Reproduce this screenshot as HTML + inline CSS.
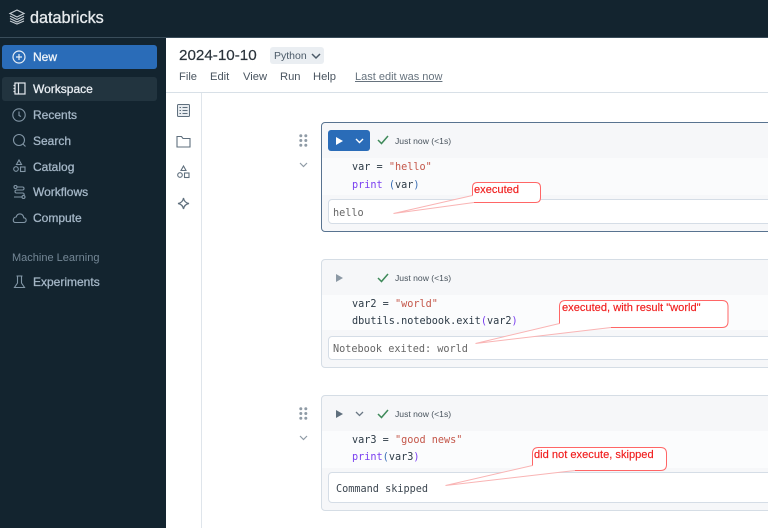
<!DOCTYPE html>
<html><head><meta charset="utf-8"><style>
*{box-sizing:border-box}
html,body{margin:0;padding:0;width:768px;height:528px;overflow:hidden;background:#fff;font-family:"Liberation Sans",sans-serif}
.a{position:absolute;white-space:nowrap}
.nav{position:absolute;left:33px;font-size:12px;font-weight:normal;-webkit-text-stroke:.3px currentColor;color:#a4b6c6;line-height:16px;white-space:nowrap}
.menu{position:absolute;top:70px;font-size:11.2px;color:#4a5560;line-height:15px}
.cell{position:absolute;left:321px;width:460px;background:#f6f7f9;border:1px solid #d5dde5;border-radius:4px}
.code{position:absolute;left:352px;font-family:"DejaVu Sans Mono",monospace;font-size:10.2px;line-height:14px;color:#2c3a46;white-space:pre}
.out{position:absolute;left:328px;width:450px;background:#fff;border:1px solid #d5dde6;border-radius:4px}
.outt{position:absolute;font-family:"DejaVu Sans Mono",monospace;font-size:10.2px;line-height:14px;color:#666;white-space:pre}
.time{position:absolute;left:395px;font-size:8.6px;color:#47525c;line-height:12px;white-space:nowrap}
.red{position:absolute;font-size:11.1px;color:#f01c1c;line-height:13px;white-space:nowrap;-webkit-text-stroke:.15px #f01c1c}
.s{color:#c4574a}.k{color:#7a3ff0}.p{color:#3b6fb5}
svg{position:absolute;overflow:visible}
</style></head><body>
<div class="a" style="left:0;top:0;width:768px;height:38px;background:#13242f;border-bottom:1px solid #3a4d5a"></div>
<div class="a" style="left:0;top:38px;width:166px;height:490px;background:#13242f"></div>
<svg style="left:9px;top:9px" width="16" height="16" viewBox="0 0 16 16" fill="none" stroke="#c5ccd2" stroke-width="1.200"><path d="M8 1L15 4.500L8 8L1 4.500Z"/><path d="M1 7L8 10.500L15 7M1 9.500L8 13L15 9.500M1 12L8 15L15 12"/></svg>
<div class="a" style="left:30px;top:9px;font-size:16.200px;line-height:18px;color:#e6eaed;-webkit-text-stroke:.3px #e6eaed">databricks</div>

<div class="a" style="left:2px;top:45px;width:155px;height:24px;background:#2a6cb8;border-radius:3px"></div>
<svg style="left:12px;top:50px" width="14" height="14" viewBox="0 0 14 14" fill="none" stroke="#e8eef5" stroke-width="1.200"><circle cx="7" cy="7" r="6"/><path d="M7 4V10M4 7H10"/></svg>
<div class="nav" style="top:49px;color:#eef3f8">New</div>

<div class="a" style="left:2px;top:77px;width:155px;height:24px;background:#22343f;border-radius:3px"></div>
<svg style="left:13px;top:82px" width="13" height="14" viewBox="0 0 13 14" fill="none" stroke="#e4e9ee" stroke-width="1.200"><rect x="2" y="1" width="10" height="11"/><path d="M5.500 1V12M0.500 3.500H2.500M0.500 6.500H2.500M0.500 9.500H2.500"/></svg>
<div class="nav" style="top:81px;color:#e8edf2">Workspace</div>

<svg style="left:12px;top:108px" width="14" height="14" viewBox="0 0 14 14" fill="none" stroke="#8296a6" stroke-width="1.100"><circle cx="7" cy="7" r="6.200"/><path d="M7 3.500V7.500L9 8.500"/></svg>
<div class="nav" style="top:107px">Recents</div>
<svg style="left:13px;top:134px" width="14" height="14" viewBox="0 0 14 14" fill="none" stroke="#8296a6" stroke-width="1.100"><circle cx="6" cy="6" r="5.500"/><path d="M10 10L12.500 12.500"/></svg>
<div class="nav" style="top:133px">Search</div>
<svg style="left:13px;top:159px" width="13" height="14" viewBox="0 0 13 14" fill="none" stroke="#8296a6" stroke-width="1.100"><path d="M6 1L8.500 5.500H3.500Z"/><circle cx="3" cy="10" r="2.300"/><rect x="7.500" y="8" width="4.500" height="4.500"/></svg>
<div class="nav" style="top:159px">Catalog</div>
<svg style="left:13px;top:185px" width="13" height="14" viewBox="0 0 13 14" fill="none" stroke="#8296a6" stroke-width="1.100"><circle cx="2.500" cy="2" r="1.500"/><circle cx="10.500" cy="12" r="1.500"/><path d="M4 2H9.500C11.500 2 11.500 5 9.500 5H3.500C1.500 5 1.500 8 3.500 8H9.500C11.500 8 11.500 10 10.500 10.500M1 12H8.500"/></svg>
<div class="nav" style="top:184px">Workflows</div>
<svg style="left:12px;top:212px" width="15" height="12" viewBox="0 0 15 12" fill="none" stroke="#8296a6" stroke-width="1.100"><path d="M3.500 10.500H11.500C15 10.500 15 6 11.800 5.800C11 1 5.500 0.500 4.200 5C1 5 0 10.500 3.500 10.500Z"/></svg>
<div class="nav" style="top:210px">Compute</div>
<div class="a" style="left:12px;top:251px;font-size:11px;line-height:14px;color:#748796">Machine Learning</div>
<svg style="left:13px;top:275px" width="13" height="14" viewBox="0 0 13 14" fill="none" stroke="#8296a6" stroke-width="1.100"><path d="M3.500 1H9.500M4.500 1V8L1.500 12.500H11.500L8.500 8V1"/></svg>
<div class="nav" style="top:274px">Experiments</div>

<div class="a" style="left:179px;top:46px;font-size:15.200px;line-height:20px;color:#2a333b;-webkit-text-stroke:.2px #2a333b">2024-10-10</div>
<div class="a" style="left:270px;top:47px;width:54px;height:17px;background:#eaeef2;border-radius:3px"></div>
<div class="a" style="left:274px;top:50px;font-size:10.500px;line-height:13px;color:#4b5a68">Python</div>
<svg style="left:311px;top:53px" width="10" height="6" viewBox="0 0 10 6" fill="none" stroke="#4b5a68" stroke-width="1.500"><path d="M1 1L5 5L9 1"/></svg>
<div class="menu" style="left:179px">File</div>
<div class="menu" style="left:210px">Edit</div>
<div class="menu" style="left:243px">View</div>
<div class="menu" style="left:280px">Run</div>
<div class="menu" style="left:313px">Help</div>
<div class="menu" style="left:355px;text-decoration:underline;color:#67737e;font-size:11px">Last edit was now</div>
<div class="a" style="left:166px;top:92px;width:602px;height:1px;background:#d8e0e7"></div>
<div class="a" style="left:201px;top:93px;width:1px;height:435px;background:#dfe5eb"></div>

<svg style="left:177px;top:104px" width="13" height="13" viewBox="0 0 13 13" fill="#e8ecf0" stroke="#5f6f7d" stroke-width="1"><rect x="0.500" y="0.500" width="12" height="12" rx="1"/><path d="M2.500 3.500H4M2.500 6.500H4M2.500 9.500H4M5.500 3.500H10.500M5.500 6.500H10.500M5.500 9.500H10.500" fill="none"/></svg>
<svg style="left:176px;top:135px" width="15" height="13" viewBox="0 0 15 13" fill="none" stroke="#5f6f7d" stroke-width="1.100"><path d="M1 1.500H5.500L7 3.500H14V12H1Z"/></svg>
<svg style="left:177px;top:165px" width="13" height="14" viewBox="0 0 13 14" fill="none" stroke="#5f6f7d" stroke-width="1.100"><path d="M6.500 1L9 5.500H4Z"/><circle cx="3" cy="10" r="2.300"/><rect x="7.500" y="8" width="4.500" height="4.500"/></svg>
<svg style="left:177px;top:197px" width="13" height="13" viewBox="0 0 13 13" fill="none" stroke="#5f6f7d" stroke-width="1.200"><path d="M6.500 1C7 4 9 6 12 6.500C9 7 7 9 6.500 12C6 9 4 7 1 6.500C4 6 6 4 6.500 1Z"/></svg>

<!-- drag handles -->
<svg style="left:299px;top:134px" width="9" height="13" fill="#8f9ba6"><circle cx="1.800" cy="1.800" r="1.500"/><circle cx="6.800" cy="1.800" r="1.500"/><circle cx="1.800" cy="6.500" r="1.500"/><circle cx="6.800" cy="6.500" r="1.500"/><circle cx="1.800" cy="11.200" r="1.500"/><circle cx="6.800" cy="11.200" r="1.500"/></svg>
<svg style="left:299px;top:162px" width="9" height="6" fill="none" stroke="#8f9ba6" stroke-width="1.200"><path d="M1 1L4.500 4.500L8 1"/></svg>
<svg style="left:299px;top:407px" width="9" height="13" fill="#8f9ba6"><circle cx="1.800" cy="1.800" r="1.500"/><circle cx="6.800" cy="1.800" r="1.500"/><circle cx="1.800" cy="6.500" r="1.500"/><circle cx="6.800" cy="6.500" r="1.500"/><circle cx="1.800" cy="11.200" r="1.500"/><circle cx="6.800" cy="11.200" r="1.500"/></svg>
<svg style="left:299px;top:435px" width="9" height="6" fill="none" stroke="#8f9ba6" stroke-width="1.200"><path d="M1 1L4.500 4.500L8 1"/></svg>

<!-- cell 1 -->
<div class="cell" style="top:122px;height:110px;border:1.500px solid #587390"></div>
<div class="a" style="left:322px;top:158px;width:446px;height:37px;background:#fafbfc"></div>
<div class="a" style="left:328px;top:130px;width:42px;height:21px;background:#2a6cb8;border-radius:3px"></div>
<svg style="left:335px;top:136px" width="9" height="10" fill="#fff"><path d="M1 1L8 5L1 9Z"/></svg>
<svg style="left:355px;top:138px" width="9" height="6" fill="none" stroke="#fff" stroke-width="1.400"><path d="M1 1L4.500 4.500L8 1"/></svg>
<svg style="left:377px;top:135px" width="12" height="10" fill="none" stroke="#3f8a5a" stroke-width="1.500"><path d="M1 5L4.500 8.500L11 1"/></svg>
<div class="time" style="top:135px">Just now (&lt;1s)</div>
<div class="code" style="top:161px">var = <span class="s">"hello"</span></div>
<div class="code" style="top:179px"><span class="k">print</span> <span class="p">(</span>var<span class="p">)</span></div>
<div class="out" style="top:199px;height:25px"></div>
<div class="outt" style="left:333px;top:207px">hello</div>

<!-- cell 2 -->
<div class="cell" style="top:259px;height:109px"></div>
<div class="a" style="left:322px;top:295px;width:446px;height:35px;background:#fbfcfd"></div>
<svg style="left:335px;top:273px" width="9" height="10" fill="#8c99a5"><path d="M1 1L8 5L1 9Z"/></svg>
<svg style="left:377px;top:273px" width="12" height="10" fill="none" stroke="#3f8a5a" stroke-width="1.500"><path d="M1 5L4.500 8.500L11 1"/></svg>
<div class="time" style="top:272px">Just now (&lt;1s)</div>
<div class="code" style="top:298px">var2 = <span class="s">"world"</span></div>
<div class="code" style="top:315px">dbutils.notebook.exit<span class="k">(</span>var2<span class="k">)</span></div>
<div class="out" style="top:336px;height:24px"></div>
<div class="outt" style="left:333px;top:343px">Notebook exited: world</div>

<!-- cell 3 -->
<div class="cell" style="top:395px;height:116px"></div>
<div class="a" style="left:322px;top:431px;width:446px;height:37px;background:#fbfcfd"></div>
<svg style="left:335px;top:409px" width="9" height="10" fill="#5f6f7d"><path d="M1 1L8 5L1 9Z"/></svg>
<svg style="left:355px;top:411px" width="9" height="6" fill="none" stroke="#6b7885" stroke-width="1.300"><path d="M1 1L4.500 4.500L8 1"/></svg>
<svg style="left:377px;top:409px" width="12" height="10" fill="none" stroke="#3f8a5a" stroke-width="1.500"><path d="M1 5L4.500 8.500L11 1"/></svg>
<div class="time" style="top:408px">Just now (&lt;1s)</div>
<div class="code" style="top:434px">var3 = <span class="s">"good news"</span></div>
<div class="code" style="top:451px"><span class="k">print</span><span class="p">(</span>var3<span class="k">)</span></div>
<div class="out" style="top:472px;height:31px"></div>
<div class="outt" style="left:336px;top:483px;color:#3c4650">Command skipped</div>

<!-- callouts -->
<svg style="left:0;top:0" width="768" height="528" fill="#fff" stroke="none">
<path d="M477.500 182.500H535.500Q540.500 182.500 540.500 187.500V197.500Q540.500 202.500 535.500 202.500H474L393.500 213.500L472.500 195.500V187.500Q472.500 182.500 477.500 182.500Z"/>
<path d="M565.500 300.500H722Q728 300.500 728 306.500V321.500Q728 327.500 722 327.500H611L475.500 343.500L559.500 323.500V306.500Q559.500 300.500 565.500 300.500Z"/>
<path d="M538.500 447.500H660.500Q666.500 447.500 666.500 453.500V464.500Q666.500 470.500 660.500 470.500H575L445.500 485.500L532.500 465.500V453.500Q532.500 447.500 538.500 447.500Z"/>
<g fill="none" stroke="#f9b4b4" stroke-width="1">
<path d="M472.500 195.500L393.500 213.500L474 202.500"/>
<path d="M559.500 323.500L475.500 343.500L611 327.500"/>
<path d="M532.500 465.500L445.500 485.500L575 470.500"/>
</g>
<g fill="none" stroke="#f66" stroke-width="1">
<path d="M472.500 195.500V187.500Q472.500 182.500 477.500 182.500H535.500Q540.500 182.500 540.500 187.500V197.500Q540.500 202.500 535.500 202.500H474"/>
<path d="M559.500 323.500V306.500Q559.500 300.500 565.500 300.500H722Q728 300.500 728 306.500V321.500Q728 327.500 722 327.500H611"/>
<path d="M532.500 465.500V453.500Q532.500 447.500 538.500 447.500H660.500Q666.500 447.500 666.500 453.500V464.500Q666.500 470.500 660.500 470.500H575"/>
</g>
</svg>
<div class="red" style="left:474px;top:184px">executed</div>
<div class="red" style="left:562px;top:302px">executed, with result "world"</div>
<div class="red" style="left:534px;top:449px">did not execute, skipped</div>
</body></html>
